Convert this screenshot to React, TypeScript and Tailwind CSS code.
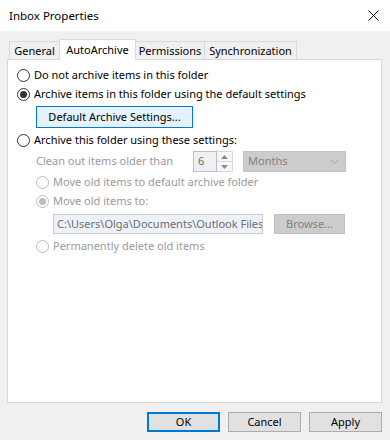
import React from "react";

const Radio = ({ checked = false, disabled = false }: { checked?: boolean; disabled?: boolean }) => (
    <span
        className={`w-[13px] h-[13px] rounded-full border flex items-center justify-center shrink-0 bg-white ${
            disabled ? "border-[#bcbcbc]" : "border-[#333333]"
        }`}
    >
        {checked && (
            <span className={`w-[7px] h-[7px] rounded-full ${disabled ? "bg-[#bcbcbc]" : "bg-[#333333]"}`}></span>
        )}
    </span>
);

const RadioRow = ({
    label,
    checked,
    disabled,
    className = "",
}: {
    label: string;
    checked?: boolean;
    disabled?: boolean;
    className?: string;
}) => (
    <div className={`h-[19px] flex items-center gap-[4px] ${className}`}>
        <Radio checked={checked} disabled={disabled} />
        <span className={disabled ? "text-[#9a9a9a]" : "text-black"}>{label}</span>
    </div>
);

const tabs = ["General", "AutoArchive", "Permissions", "Synchronization"];
const tabWidths = ["w-[51px]", "w-[77px]", "w-[70px]", "w-[93px]"];

export default function App() {
    return (
        <div className="w-[390px] h-[440px] bg-[#f0f0f0] flex flex-col font-['Noto_Sans',sans-serif] text-[11px] text-black overflow-hidden">
            {/* title bar */}
            <div className="h-[31px] bg-white flex items-center justify-between pl-[9px] pr-[11px]">
                <span className="text-[11.5px]">Inbox Properties</span>
                <svg width="11" height="11" viewBox="0 0 11 11">
                    <path d="M0.5 0.5 L10.5 10.5 M10.5 0.5 L0.5 10.5" stroke="#111" strokeWidth="1" fill="none" />
                </svg>
            </div>

            <div className="pl-[7px] pr-[8px] pt-[7px] flex flex-col">
                {/* tabs */}
                <div className="h-[21px] flex items-end pl-[2px]">
                    {tabs.map((t, i) =>
                        t === "AutoArchive" ? (
                            <div
                                key={t}
                                className={`${tabWidths[i]} h-[21px] -mb-px -ml-px relative z-10 bg-white border border-b-0 border-[#d9d9d9] flex items-start justify-center pt-[2px]`}
                            >
                                {t}
                            </div>
                        ) : (
                            <div
                                key={t}
                                className={`${tabWidths[i]} h-[18px] bg-[#f0f0f0] border border-b-0 border-[#d9d9d9] flex items-center justify-center pt-[1px] ${
                                    i > 0 ? "-ml-px" : ""
                                }`}
                            >
                                {t}
                            </div>
                        )
                    )}
                </div>

                {/* panel */}
                <div className="h-[344px] bg-white border border-[#d9d9d9] pl-[9px] pt-[6px] flex flex-col">
                    <RadioRow label="Do not archive items in this folder" />
                    <RadioRow label="Archive items in this folder using the default settings" checked />
                    <div className="mt-[2px] ml-[19px] w-[157px] h-[22px] bg-[#e5f1fb] border border-[#0078d7] flex items-center justify-center">
                        Default Archive Settings...
                    </div>
                    <RadioRow label="Archive this folder using these settings:" className="mt-[3px]" />

                    <div className="pl-[19px] flex flex-col">
                        <div className="mt-px h-[21px] flex items-center">
                            <span className="w-[157px] text-[#9a9a9a]">Clean out items older than</span>
                            <div className="w-[24px] h-[21px] border border-[#adc2d8] bg-[#f0f0f0] flex items-center pl-[4px] text-[#6d6d6d]">
                                6
                            </div>
                            <div className="w-[16px] h-[21px] border border-l-0 border-[#d9d9d9] bg-[#f7f7f7] flex flex-col">
                                <div className="flex-1 flex items-center justify-center border-b border-[#d9d9d9]">
                                    <svg width="7" height="4" viewBox="0 0 7 4">
                                        <path d="M0 4 L3.5 0 L7 4 Z" fill="#8a8a8a" />
                                    </svg>
                                </div>
                                <div className="flex-1 flex items-center justify-center">
                                    <svg width="7" height="4" viewBox="0 0 7 4">
                                        <path d="M0 0 L3.5 4 L7 0 Z" fill="#8a8a8a" />
                                    </svg>
                                </div>
                            </div>
                            <div className="ml-[10px] w-[103px] h-[21px] bg-[#cccccc] border border-[#c4c4c4] flex items-center justify-between pl-[4px] pr-[6px] text-[#838383]">
                                <span>Months</span>
                                <svg width="9" height="5" viewBox="0 0 9 5">
                                    <path d="M0.5 0.5 L4.5 4.5 L8.5 0.5" stroke="#a9a9a9" strokeWidth="1" fill="none" />
                                </svg>
                            </div>
                        </div>

                        <RadioRow label="Move old items to default archive folder" disabled className="mt-px" />
                        <RadioRow label="Move old items to:" checked disabled />

                        <div className="mt-[3px] ml-[17px] h-[20px] flex items-center">
                            <div className="w-[210px] h-[20px] bg-[#eef2f8] border border-[#c9ced6] flex items-center pl-[3px] text-[#6d6d6d] overflow-hidden whitespace-nowrap">
                                C:\Users\Olga\Documents\Outlook Files
                            </div>
                            <div className="ml-[11px] w-[71px] h-[20px] bg-[#cccccc] border border-[#bfbfbf] flex items-center justify-center text-[#838383]">
                                Browse...
                            </div>
                        </div>

                        <RadioRow label="Permanently delete old items" disabled className="mt-[3px]" />
                    </div>
                </div>

                {/* buttons */}
                <div className="mt-[9px] flex justify-end gap-[8px]">
                    <button className="w-[73px] h-[20px] bg-[#e1e1e1] border-2 border-[#0078d7] flex items-center justify-center">
                        OK
                    </button>
                    <button className="w-[73px] h-[20px] bg-[#e1e1e1] border border-[#adadad] flex items-center justify-center">
                        Cancel
                    </button>
                    <button className="w-[73px] h-[20px] bg-[#e1e1e1] border border-[#adadad] flex items-center justify-center">
                        Apply
                    </button>
                </div>
            </div>
        </div>
    );
}
